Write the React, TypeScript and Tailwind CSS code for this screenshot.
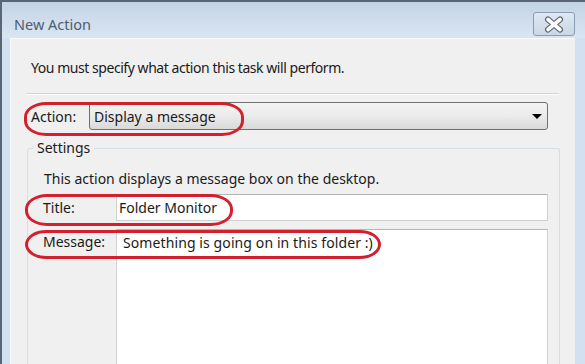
import React from "react";

function Ellipse({ className }: { className: string }) {
  return (
    <div
      className={
        "pointer-events-none absolute border-[3px] border-[#d4202c] rounded-[22px/15px] " +
        className
      }
    />
  );
}

export default function App() {
  return (
    <div className="relative w-[585px] h-[364px] overflow-hidden bg-[#d3e0ef] border-l-2 border-t-2 border-[#5a6676] font-['Noto_Sans',sans-serif] text-[#1a1a1a]">
      <div className="flex flex-col h-full">
        {/* title bar */}
        <div className="h-[36px] shrink-0 flex items-start justify-between pl-[12px] pr-[10px] bg-gradient-to-b from-[#c4d4e6] to-[#d9e5f2]">
          <span className="mt-[12px] text-[14.5px] leading-[20px] text-[#4e5d6f]">New Action</span>
          <div className="mt-[10px] w-[42px] h-[24px] rounded-[3px] border border-[#8c9cb0] bg-gradient-to-b from-[#dfe8f3] to-[#c9d7e7] flex items-center justify-center">
            <svg width="22" height="17" viewBox="0 0 22 17">
              <path d="M5 3.5 L17 13.5 M17 3.5 L5 13.5" stroke="#5c6470" strokeWidth="6" strokeLinecap="round" />
              <path d="M5 3.5 L17 13.5 M17 3.5 L5 13.5" stroke="#ffffff" strokeWidth="3.6" strokeLinecap="round" />
            </svg>
          </div>
        </div>
        {/* content */}
        <div className="flex-1 ml-[8px] w-[565px] bg-[#f0f0f0] border-l border-t border-[#fafafa] flex flex-col">
          <p className="pl-[20px] pt-[19px] text-[14px] leading-[20px] tracking-[-0.45px]">
            You must specify what action this task will perform.
          </p>
          <div className="mt-[15px] ml-[15px] w-[533px] h-px bg-[#d5d5d5] border-b border-white box-content" />
          <div className="mt-[7px] flex items-center pl-[20px]">
            <span className="w-[58px] text-[14px]">Action:</span>
            <div className="relative w-[459px] h-[28px] rounded-[3px] border border-[#707070] bg-gradient-to-b from-[#f3f3f3] via-[#ebebeb] to-[#d9d9d9] flex items-center pl-[4px] text-[14px]">
              Display a message
              <div className="absolute right-[5px] top-[11px] w-0 h-0 border-l-[5px] border-r-[5px] border-t-[5px] border-l-transparent border-r-transparent border-t-black" />
            </div>
          </div>
          {/* group box */}
          <div className="relative mt-[18px] ml-[16px] w-[533px] flex-1 border-l border-t border-r border-[#d5dfe5] rounded-t-[3px]">
            <span className="absolute -top-[11px] left-[5px] px-[4px] bg-[#f0f0f0] text-[14px] leading-[20px]">Settings</span>
            <p className="pl-[16px] pt-[20px] text-[14px] leading-[20px]">
              This action displays a message box on the desktop.
            </p>
            <div className="mt-[5px] flex items-center">
              <span className="w-[88px] pl-[15px] text-[14px]">Title:</span>
              <div className="w-[432px] h-[27px] bg-white border border-[#d0d0d0] border-t-[#b5b5b5] flex items-center pl-[2px] text-[14px]">
                Folder Monitor
              </div>
            </div>
            <div className="mt-[8px] flex items-start">
              <span className="w-[88px] pl-[15px] pt-[3px] text-[14px] leading-[20px]">Message:</span>
              <div className="w-[432px] h-[150px] bg-white border border-[#d0d0d0] border-t-[#b5b5b5] pl-[6px] pt-[3px] text-[14px] leading-[20px] tracking-[0.1px]">
                Something is going on in this folder :)
              </div>
            </div>
          </div>
        </div>
      </div>
      <Ellipse className="left-[22px] top-[100px] w-[220px] h-[34px]" />
      <Ellipse className="left-[23px] top-[192px] w-[208px] h-[32px]" />
      <Ellipse className="left-[23px] top-[228px] w-[356px] h-[29px]" />
    </div>
  );
}
